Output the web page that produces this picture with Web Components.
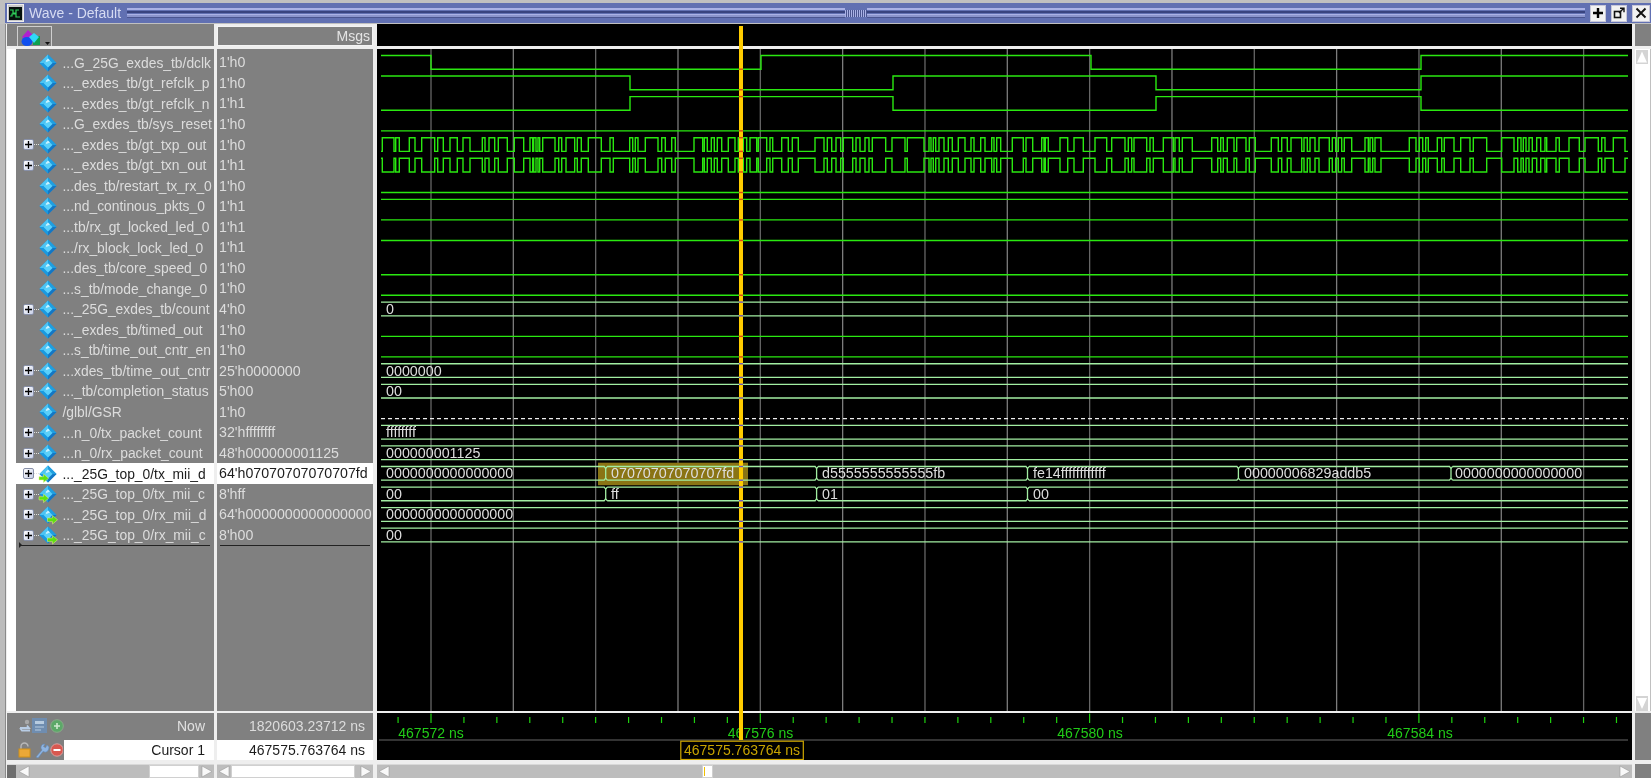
<!DOCTYPE html>
<html><head><meta charset="utf-8"><title>Wave - Default</title>
<style>
html,body{margin:0;padding:0;height:778px;overflow:hidden;background:#c0c0c0;font-family:"Liberation Sans",Arial,sans-serif}
</style></head><body>
<wave-app></wave-app>
<script>
const ROW=20.55, hi=n=>55.5+ROW*n, lo=n=>69.2+ROW*n, mid=n=>62.35+ROW*n;
const SIGNALS=[
["...G_25G_exdes_tb/dclk","1'h0",0,""],["..._exdes_tb/gt_refclk_p","1'h0",0,""],["..._exdes_tb/gt_refclk_n","1'h1",0,""],
["...G_exdes_tb/sys_reset","1'h0",0,""],["..._exdes_tb/gt_txp_out","1'h0",1,""],["..._exdes_tb/gt_txn_out","1'h1",1,""],
["...des_tb/restart_tx_rx_0","1'h0",0,""],["...nd_continous_pkts_0","1'h1",0,""],["...tb/rx_gt_locked_led_0","1'h1",0,""],
[".../rx_block_lock_led_0","1'h1",0,""],["...des_tb/core_speed_0","1'h0",0,""],["...s_tb/mode_change_0","1'h0",0,""],
["..._25G_exdes_tb/count","4'h0",1,""],["..._exdes_tb/timed_out","1'h0",0,""],["...s_tb/time_out_cntr_en","1'h0",0,""],
["...xdes_tb/time_out_cntr","25'h0000000",1,""],["..._tb/completion_status","5'h00",1,""],["/glbl/GSR","1'h0",0,""],
["...n_0/tx_packet_count","32'hffffffff",1,""],["...n_0/rx_packet_count","48'h000000001125",1,""],
["..._25G_top_0/tx_mii_d","64'h07070707070707fd",1,"out"],["..._25G_top_0/tx_mii_c","8'hff",1,"out"],
["..._25G_top_0/rx_mii_d","64'h0000000000000000",1,"in"],["..._25G_top_0/rx_mii_c","8'h00",1,"in"]];
const Z7=[[37,72],[77,88],[118,135],[155,194],[203,220],[240,262],[279,300],[337,345],[357,374],[385,412],[433,461],[480,488],[491,498],[504,509],[518,555],[566,575],[588,614],[622,634],[655,694],[720,730],[779,788],[796,804],[826,864],[875,886],[905,916],[972,998],[1003,1012],[1024,1033],[1042,1055],[1075,1095],[1105,1112],[1120,1130],[1140,1160],[1165,1190]];
const Z10=[[0,8],[35,55],[67,85],[135,162],[172,185],[198,212],[220,248],[258,270],[285,297],[307,347],[366,405],[412,462],[477,483],[490,497],[507,522],[535,547],[565,585],[603,612],[632,645],[665,672],[680,692],[727,760],[768,788],[815,822],[826,835],[870,893],[912,940],[975,1010],[1025,1065],[1075,1085],[1092,1130]];
const Z8=[[0,10],[40,70],[75,88],[97,127],[185,203],[212,220],[232,252],[260,288],[298,316],[364,385],[395,412],[423,455],[462,472],[480,495],[507,538],[547,557],[565,575],[583,605],[645,655],[660,668],[675,693],[778,798],[808,818],[827,835],[862,875],[883,912],[932,960],[970,1010],[1055,1092],[1103,1113],[1120,1128],[1137,1147],[1160,1172],[1185,1190],[1218,1228],[1257,1288],[1305,1345],[1355,1365],[1390,1425]];
const HIGHS=[...Z7.map(p=>p.map(v=>370+v/3)),...Z10.map(p=>p.map(v=>770+v/3)),...Z8.map(p=>p.map(v=>1150+v/3))];
const L=381,R=1628;
function digital(n,start,tr){let high=start,d=`M${L} ${high?hi(n):lo(n)}`;for(const x of tr){d+=`H${x}V${high?lo(n):hi(n)}`;high=!high}return d+`H${R}`}
function pulses(n,inv){const a=inv?hi(n):lo(n),b=inv?lo(n):hi(n);let d=`M${L} ${a}`;for(const [s,e] of HIGHS)d+=`H${s.toFixed(1)}V${b}H${e.toFixed(1)}V${a}`;return d+`H${R}`}
function bus(n,xs){const t=hi(n),b=lo(n);let d="",p=L;for(const x of xs){d+=`M${p} ${t}H${x-1.5}L${x} ${t+2.2}V${b-2.2}L${x-1.5} ${b}H${p}`;d+=`M${x+1.5} ${t}L${x} ${t+2.2}M${x+1.5} ${b}L${x} ${b-2.2}`;p=x+1.5}return d+`M${p} ${t}H${R}M${p} ${b}H${R}`}
const ICON_DIAMOND=`<polygon points="9,0.5 17.5,9 9,17.5 0.5,9" fill="#1a8fd8"/><polygon points="9,0.5 0.5,9 4.5,9 9,4.5" fill="#4cc4f4"/><polygon points="9,0.5 17.5,9 13.5,9 9,4.5" fill="#1f9fe0"/><polygon points="0.5,9 9,17.5 9,13.5 4.5,9" fill="#1a9ae0"/><polygon points="17.5,9 9,17.5 9,13.5 13.5,9" fill="#1477c4"/><polygon points="9,4.5 13.5,9 9,13.5 4.5,9" fill="#5ad0fa"/><polygon points="9,4.5 11,6.5 7.5,8 6.5,7" fill="#c8f2ff"/>`;

class TitleBar extends HTMLElement{connectedCallback(){this.attachShadow({mode:"open"}).innerHTML=`<style>
:host{display:flex;align-items:center;height:20px;background:#6170b2;color:#d6dbf2;font-size:14px;margin-left:5px;padding-left:2px;box-sizing:border-box}
.ic{width:17px;height:18px;flex:none;margin-right:5px}
.t{width:98px;flex:none;white-space:nowrap}
.l{flex:1;height:10px;background:linear-gradient(#aab2e6 0 1.5px,#6170b2 1.5px 2.5px,#39447f 2.5px 5px,#6170b2 5px 6px,#aab2e6 6px 7.5px,#8a94cc 7.5px 8.5px,#4a5590 8.5px 10px)}
.g{width:22px;height:7px;flex:none;background:#6170b2 repeating-linear-gradient(90deg,#aab2e6 0 1px,#4a5590 1px 2px)}
.bs{display:flex;flex:none;margin-left:5px;gap:5px}
.b{width:16px;height:17px;background:#f2f2f2;border:1px solid #c8c8d8;box-sizing:border-box;display:flex;align-items:center;justify-content:center}
.b:last-child{width:18px;margin-right:1px}
</style>
<svg class="ic" viewBox="0 0 17 18"><rect x=".5" y=".5" width="16" height="17" fill="#c8c8c8" stroke="#eee"/><rect x="2" y="3" width="13" height="13" fill="#05100c"/><path d="M3 6h3v3h3V6h3M3 12h2v-2h4v3h4" fill="none" stroke="#2fd05a" stroke-width="1.2"/></svg>
<span class="t">Wave - Default</span><span class="l"></span><span class="g"></span><span class="l"></span>
<span class="bs"><span class="b"><svg width="12" height="12"><path d="M6 1v10M1 6h10" stroke="#000" stroke-width="2.4"/></svg></span>
<span class="b"><svg width="12" height="12"><rect x="1.5" y="4.5" width="6" height="6" fill="none" stroke="#111" stroke-width="1.6"/><path d="M6 6l4.5-4.5M7 1.2h4v4" fill="none" stroke="#111" stroke-width="1.4"/></svg></span>
<span class="b"><svg width="12" height="12"><path d="M1.5 1.5l9 9M10.5 1.5l-9 9" stroke="#111" stroke-width="1.9"/></svg></span></span>`}}
customElements.define("title-bar",TitleBar);

class SigTool extends HTMLElement{connectedCallback(){this.attachShadow({mode:"open"}).innerHTML=`<style>
:host{display:block;background:#808080;padding:2px 0 0 10px;box-sizing:border-box}
.b{width:35px;height:20px;box-sizing:border-box;border:solid #cfcfcf;border-width:1px 1px 0 1px;display:block}
</style><svg class="b" viewBox="0 0 33 19"><polygon points="4,10 10,3 15,8 9,15" fill="#b020d0"/><rect x="15" y="9" width="7" height="9" fill="#10a050"/><ellipse cx="9" cy="14.5" rx="5.5" ry="4.5" fill="#1050f0"/><polygon points="11,10 16,6 21,10 16,16" fill="#30d8f8"/><path d="M27 15h5l-2.5 3z" fill="#111"/></svg>`}}
customElements.define("sig-tool",SigTool);

class MsgsHead extends HTMLElement{connectedCallback(){this.attachShadow({mode:"open"}).innerHTML=`<style>
:host{display:flex;align-items:center;justify-content:flex-end;background:#808080;border:1.5px solid #f4f4f4;border-bottom-width:1.5px;margin-top:2px;box-sizing:border-box;font-size:14px;color:#e4e4e4;padding-right:2px}
</style><slot></slot>`}}
customElements.define("msgs-head",MsgsHead);

class SigRow extends HTMLElement{connectedCallback(){
 const exp=this.hasAttribute("expand"),dir=this.getAttribute("dir-kind")||"";
 const arrow=dir==="out"?`<path d="M0 11.7h4.5V9l5 4.3-5 4.3v-2.7H0z" fill="#5ee010" stroke="#e8f080" stroke-width=".5"/>`:dir==="in"?`<path d="M8.5 12h5V9.5l5 4.3-5 4.3V15.6h-5z" fill="#5ee010" stroke="#e8f080" stroke-width=".5"/>`:"";
 this.attachShadow({mode:"open"}).innerHTML=`<style>
:host{display:flex;align-items:center;height:${ROW}px;font-size:13.85px;color:#dcdcdc;white-space:nowrap}
:host([selected]){background:#fff;color:#1c1c1c}
.e{width:23px;flex:none;display:flex;align-items:center;padding-left:7px;box-sizing:border-box;height:12px}
.x{width:11px;height:11px;flex:none;box-sizing:border-box;border:1px solid #8890a8;border-radius:2px;background:linear-gradient(135deg,#fff,#c8d0e8);display:flex;align-items:center;justify-content:center}
.d{flex:1;border-top:1px dotted #e0e0e0}
svg.i{flex:none;overflow:visible}
.n{margin-left:5.5px}
</style><span class="e">${exp?`<span class="x"><svg width="7" height="7"><path d="M3.5 0v7M0 3.5h7" stroke="#000" stroke-width="1.3"/></svg></span><span class="d"></span>`:""}</span>
<svg class="i" width="18" height="18" viewBox="0 0 18 18">${ICON_DIAMOND}${arrow}</svg><span class="n"><slot></slot></span>`}}
customElements.define("sig-row",SigRow);

class ValRow extends HTMLElement{connectedCallback(){this.attachShadow({mode:"open"}).innerHTML=`<style>
:host{display:block;height:${ROW}px;line-height:${ROW}px;font-size:14.2px;color:#dcdcdc;white-space:nowrap;padding-left:2px;box-sizing:border-box}
:host([selected]){background:#fff;color:#1c1c1c}
</style><slot></slot>`}}
customElements.define("val-row",ValRow);

class SignalNames extends HTMLElement{connectedCallback(){
 this.attachShadow({mode:"open"}).innerHTML=`<style>
:host{display:block;background:#808080;border-left:9px solid #fff;padding-top:3.4px;box-sizing:border-box;overflow:hidden;position:relative}
.end{height:1px;background:#222;margin:0 4px 0 4px;position:relative;top:-1px}
.end::before{content:"";position:absolute;left:-1px;top:-3px;border:solid transparent;border-width:3.5px 0 3.5px 3.5px;border-left-color:#222}
</style><slot></slot><div class="end"></div>`;
 SIGNALS.forEach((s,i)=>{const r=document.createElement("sig-row");r.textContent=s[0];if(s[2])r.setAttribute("expand","");if(s[3])r.setAttribute("dir-kind",s[3]);if(i===20)r.setAttribute("selected","");this.appendChild(r)})}}
customElements.define("signal-names",SignalNames);

class SignalValues extends HTMLElement{connectedCallback(){
 this.attachShadow({mode:"open"}).innerHTML=`<style>
:host{display:block;background:#808080;padding-top:3.4px;box-sizing:border-box;overflow:hidden}
.end{height:1px;background:#222;margin:0 3px;position:relative;top:-1px}
</style><slot></slot><div class="end"></div>`;
 SIGNALS.forEach((s,i)=>{const r=document.createElement("val-row");r.textContent=s[1];if(i===20)r.setAttribute("selected","");this.appendChild(r)})}}
customElements.define("signal-values",SignalValues);

class WaveView extends HTMLElement{connectedCallback(){
 let g="";for(let k=0;k<15;k++){const x=431+82.33*k;g+=`<line x1="${x}" x2="${x}" y1="49" y2="711" stroke="${k%2?'#7c7c7c':'#666'}" stroke-width="1.3"/>`}
 let dig="";
 const dg=(n,s,t)=>dig+=`<path d="${digital(n,s,t)}"/>`;
 dg(0,true,[431,761,1091,1421]);dg(1,true,[630,893,1156,1421]);dg(2,false,[630,893,1156,1421]);
 dg(3,false,[]);dig+=`<path d="${pulses(4,false)}"/><path d="${pulses(5,true)}"/>`;
 dg(6,false,[]);dg(7,true,[]);dg(8,true,[]);dg(9,true,[]);dg(10,false,[]);dg(11,false,[]);dg(13,false,[]);dg(14,false,[]);
 let bp="",tx="";
 const T=(x,n,s)=>tx+=`<text x="${x}" y="${mid(n)+5}">${s}</text>`;
 [[12,"0"],[15,"0000000"],[16,"00"],[18,"ffffffff"],[19,"000000001125"],[22,"0000000000000000"],[23,"00"]].forEach(([n,s])=>{bp+=bus(n,[]);T(386,n,s)});
 bp+=bus(20,[605.7,816.6,1027.5,1238.4,1451]);bp+=bus(21,[605.7,816.6,1027.5]);
 [[386,"0000000000000000"],[611,"07070707070707fd"],[822,"d5555555555555fb"],[1033,"fe14ffffffffffff"],[1244,"00000006829addb5"],[1455,"0000000000000000"]].forEach(([x,s])=>T(x,20,s));
 [[386,"00"],[611,"ff"],[822,"01"],[1033,"00"]].forEach(([x,s])=>T(x,21,s));
 this.attachShadow({mode:"open"}).innerHTML=`<style>:host{display:block;background:#000;overflow:hidden}svg{display:block;width:100%;height:100%}text{font:14.3px "Liberation Sans",Arial,sans-serif;fill:#dedede}</style>
<svg viewBox="377 49 1255 662" preserveAspectRatio="none">${g}
<rect x="598" y="462.7" width="150" height="22.5" fill="#8a7414"/>
<g fill="none" stroke="#2ae810" stroke-width="1.4">${dig}</g>
<line x1="${L}" x2="${R}" y1="${lo(17)}" y2="${lo(17)}" stroke="#eee" stroke-width="1.2" stroke-dasharray="4 3"/>
<path d="${bp}" fill="none" stroke="#a2eea2" stroke-width="1.3"/>${tx}</svg>`}}
customElements.define("wave-view",WaveView);

class VScroll extends HTMLElement{connectedCallback(){this.attachShadow({mode:"open"}).innerHTML=`<style>
:host{display:flex;flex-direction:column;background:#fff;padding:1px 2px 0 1px;box-sizing:border-box;border-right:1px solid #c0c0c0}
svg{display:block;flex:none;background:#d4d4d4}.t{flex:1;background:#fff}
</style><svg width="12" height="14" viewBox="0 0 12 14"><path d="M6 1.5l5 11H1z" fill="#fff"/></svg><div class="t"></div><svg width="12" height="15" viewBox="0 0 12 15"><path d="M6 13L1 2h10z" fill="#fff"/></svg>`}}
customElements.define("v-scroll",VScroll);

class CursorNames extends HTMLElement{connectedCallback(){this.attachShadow({mode:"open"}).innerHTML=`<style>
:host{display:flex;flex-direction:column;background:#808080;font-size:14px}
.r{display:flex;align-items:center;padding-left:12px}
.a{height:26.5px;color:#e0e0e0}.b{height:20px}
.s{flex:none;display:block}.f{flex:1;text-align:right;padding-right:9px;white-space:nowrap}
.w{background:#fff;color:#1c1c1c;height:20px;line-height:20px;margin-left:1px}
</style>
<div class="r a"><svg class="s" width="46" height="16" viewBox="0 0 46 16"><circle cx="8" cy="4" r="2.2" fill="#a8a8a8"/><path d="M1 10h9l-2-2.5M1 10l2 2.5h8" fill="none" stroke="#b8cce4" stroke-width="1.8"/><rect x="13" y="0" width="15" height="15" fill="#6f8db0"/><rect x="16" y="3" width="9" height="3" fill="#b8cce0"/><path d="M16 9h9M16 12h6" stroke="#b8cce0"/><circle cx="38" cy="8" r="6.3" fill="#5ca868" stroke="#8aaa8a"/><path d="M38 5v6M35 8h6" stroke="#cfe8cf" stroke-width="1.6"/></svg><span class="f"><slot name="now"></slot></span></div>
<div class="r b"><svg class="s" width="45" height="16" viewBox="-1 0 45 16" style="margin-left:-1px"><path d="M2 7V4.5a3.5 3.5 0 0 1 7 0" fill="none" stroke="#b8b8b8" stroke-width="1.4"/><rect x="0" y="7" width="11" height="8" fill="#eaa838" stroke="#cf9018"/><path d="M17 15l6-7a3.5 3.5 0 0 1 3-6l-1.5 2.5 2 1.2L28 3a3.5 3.5 0 0 1-4 6.5l-5 6.5z" fill="#8fb4e0" stroke="#5f88b8" stroke-width=".6"/><circle cx="38" cy="8" r="6.2" fill="#d85850" stroke="#d8a0a0"/><path d="M34.5 8h7" stroke="#fff" stroke-width="2"/></svg><span class="f w"><slot name="cursor"></slot></span></div>`}}
customElements.define("cursor-names",CursorNames);

class CursorValues extends HTMLElement{connectedCallback(){this.attachShadow({mode:"open"}).innerHTML=`<style>
:host{display:flex;flex-direction:column;background:#808080;font-size:14px;text-align:right}
.a{height:26.5px;line-height:26.5px;color:#dcdcdc;padding-right:8px}
.b{height:20px;line-height:20px;background:#fff;color:#1c1c1c;padding-right:8px}
</style><div class="a"><slot name="now"></slot></div><div class="b"><slot name="cursor"></slot></div>`}}
customElements.define("cursor-values",CursorValues);

class TimeAxis extends HTMLElement{connectedCallback(){
 let t="";for(let k=-1;k<38;k++){const x=431+32.93*k;if(x>1628)break;const maj=((k%10)+10)%10===0;t+=`<line x1="${x}" x2="${x}" y1="${maj?713.5:717}" y2="723" stroke="#1fd010" stroke-width="1.2"/>`}
 let l="";[[431,"467572 ns"],[760.5,"467576 ns"],[1090,"467580 ns"],[1420,"467584 ns"]].forEach(([x,s])=>l+=`<text x="${x}" y="737.5" text-anchor="middle" fill="#22cc18">${s}</text>`);
 this.attachShadow({mode:"open"}).innerHTML=`<style>:host{display:block;background:#000;overflow:hidden}svg{display:block;width:100%;height:100%}text{font:14px "Liberation Sans",Arial,sans-serif}</style>
<svg viewBox="377 713 1255 47" preserveAspectRatio="none">${t}<line x1="379" x2="1628" y1="740" y2="740" stroke="#666" stroke-width="1.2"/>${l}
<rect x="680.8" y="741.2" width="122.5" height="18.3" fill="#000" stroke="#d0a800" stroke-width="1.2"/><text x="742" y="755.3" text-anchor="middle" fill="#c8a400">467575.763764 ns</text></svg>`}}
customElements.define("time-axis",TimeAxis);

class HScroll extends HTMLElement{connectedCallback(){
 const a=+this.getAttribute("before")||0,w=+this.getAttribute("thumb")||0,gut=+this.getAttribute("gutter")||0,tick=this.hasAttribute("tick");
 this.attachShadow({mode:"open"}).innerHTML=`<style>
:host{display:flex;align-items:stretch;background:#bdbdbd;box-sizing:border-box;border-top:1px solid #d8d8d8;border-bottom:1px solid #e4e4e4}
.g{flex:none;width:${gut}px;background:#6e6e6e;margin-right:${gut?1:0}px}
svg{flex:none;display:block;align-self:center}
.s{flex:none;width:${a}px}.th{flex:none;width:${w}px;background:#fff;border:1px solid #d0d0d0;box-sizing:border-box;position:relative}
.f{flex:1}
${tick?".th::before{content:'';position:absolute;left:1px;top:1px;bottom:1px;width:1px;background:#f0c000}":""}
</style>${gut?'<div class="g"></div>':""}<svg width="14" height="13" viewBox="0 0 14 13"><path d="M2 6.5L12 1v11z" fill="#f8f8f8" stroke="#9c9c9c" stroke-width=".6"/></svg><div class="s"></div><div class="th"></div><div class="f"></div><svg width="14" height="13" viewBox="0 0 14 13"><path d="M12 6.5L2 1v11z" fill="#f8f8f8" stroke="#9c9c9c" stroke-width=".6"/></svg>`}}
customElements.define("h-scroll",HScroll);

class CursorLine extends HTMLElement{connectedCallback(){
 const lev=[[lo(0),0],[lo(1),0],[hi(2),0],[lo(3),0],[hi(4),0],[lo(4),0],[hi(5),0],[lo(5),0],[lo(6),0],[hi(7),0],[hi(8),0],[hi(9),0],[lo(10),0],[lo(11),0],[lo(13),0],[lo(14),0]];
 [12,15,16,18,19,20,21,22,23].forEach(n=>lev.push([hi(n),1],[lo(n),1]));
 const m=lev.map(([y,b])=>`<rect x="0" y="${y-26-.7}" width="4" height="1.4" fill="${b?'#6a55c8':'#d8481a'}"/>`).join("");
 this.attachShadow({mode:"open"}).innerHTML=`<style>:host{display:block;position:absolute;left:739px;top:26px;width:4px;height:714px;pointer-events:none}svg{display:block}</style><svg width="4" height="714"><rect width="4" height="714" fill="#ffcc00"/>${m}</svg>`}}
customElements.define("cursor-line",CursorLine);

class WaveApp extends HTMLElement{connectedCallback(){this.attachShadow({mode:"open"}).innerHTML=`<style>
:host{display:block;width:1651px;height:778px;position:relative;filter:blur(.4px);background:#c0c0c0;padding-top:3px;box-sizing:border-box;color:#222}
.g{display:grid;margin-top:1px;height:754px;background:#eee;grid-template-columns:7px 207px 3px 156px 4px 1255px 3px 16px;grid-template-rows:22px 3px 662px 2px 47px 3.5px 1fr}
.edge{grid-column:1;grid-row:1/-1;background:#bcbcbc;border-right:1px solid #8a8a8a;box-sizing:border-box;width:6px}
.gr{background:#808080}
.blk{background:#000}
.c2{grid-column:2}.c4{grid-column:4}.c6{grid-column:6}.c8{grid-column:8}
.r1{grid-row:1}.r3{grid-row:3}.r5{grid-row:5}.r7{grid-row:7}
</style><title-bar></title-bar>
<div class="g"><div class="edge"></div>
<sig-tool class="c2 r1"></sig-tool><msgs-head class="c4 r1">Msgs</msgs-head><div class="blk c6 r1"></div><div class="gr c8 r1"></div>
<signal-names class="c2 r3"></signal-names><signal-values class="c4 r3"></signal-values><wave-view class="c6 r3"></wave-view><v-scroll class="c8 r3"></v-scroll>
<cursor-names class="c2 r5"><span slot="now">Now</span><span slot="cursor">Cursor 1</span></cursor-names>
<cursor-values class="c4 r5"><span slot="now">1820603.23712 ns</span><span slot="cursor">467575.763764 ns</span></cursor-values>
<time-axis class="c6 r5"></time-axis><div class="gr c8 r5"></div>
<h-scroll class="c2 r7" gutter="9" before="118" thumb="50"></h-scroll>
<h-scroll class="c4 r7" thumb="124"></h-scroll>
<h-scroll class="c6 r7" before="311" thumb="11" tick></h-scroll>
<div class="gr c8 r7"></div></div>
<cursor-line></cursor-line>`}}
customElements.define("wave-app",WaveApp);
</script></body></html>
